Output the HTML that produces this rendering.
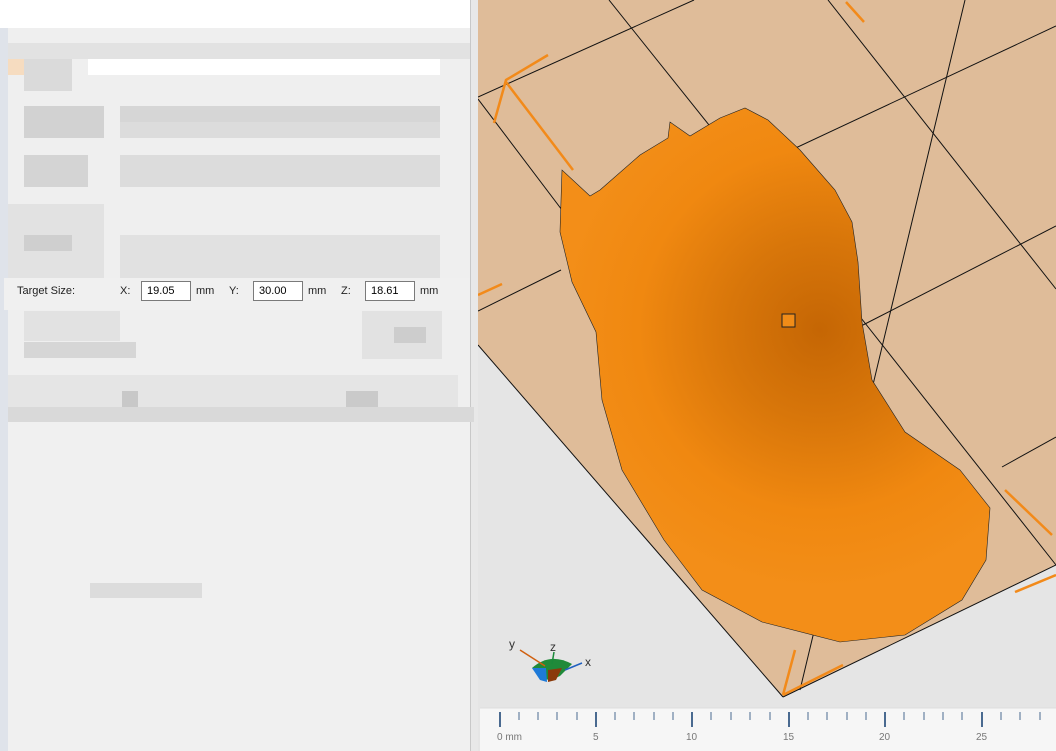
<!DOCTYPE html>
<html><head><style>
body{margin:0;width:1056px;height:751px;overflow:hidden;position:relative;font-family:"Liberation Sans",sans-serif;background:#f0f0f0}
.a{position:absolute}
.t{position:absolute;font-size:11px;color:#222;top:285px}
.in{position:absolute;top:281px;border:1px solid #7a7a7a;background:#fff;font-size:11px;line-height:18px;padding-left:5px;box-sizing:border-box;width:50px;height:20px}
</style></head><body>
<div class="a" style="left:0;top:0;width:472px;height:28px;background:#fff"></div>
<div class="a" style="left:0;top:28px;width:8px;height:723px;background:#dfe3ea"></div>
<div class="a" style="left:8px;top:28px;width:464px;height:394px;background:#efefef"></div>
<div class="a" style="left:8px;top:43px;width:464px;height:16px;background:#e2e2e2"></div>
<div class="a" style="left:8px;top:59px;width:16px;height:16px;background:#f6dcc0"></div>
<div class="a" style="left:24px;top:59px;width:48px;height:32px;background:#dadada"></div>
<div class="a" style="left:88px;top:59px;width:352px;height:16px;background:#fff"></div>
<div class="a" style="left:24px;top:106px;width:80px;height:32px;background:#d2d2d2"></div>
<div class="a" style="left:120px;top:106px;width:320px;height:32px;background:#d6d6d6"></div>
<div class="a" style="left:120px;top:122px;width:320px;height:16px;background:#dcdcdc"></div>
<div class="a" style="left:24px;top:155px;width:64px;height:32px;background:#d4d4d4"></div>
<div class="a" style="left:120px;top:155px;width:320px;height:32px;background:#dcdcdc"></div>
<div class="a" style="left:8px;top:204px;width:96px;height:74px;background:#e2e2e2"></div>
<div class="a" style="left:24px;top:235px;width:48px;height:16px;background:#cfcfcf"></div>
<div class="a" style="left:120px;top:235px;width:320px;height:43px;background:#e1e1e1"></div>
<div class="a" style="left:470px;top:0;width:8px;height:751px;background:#e8e8e8;border-left:1px solid #c8c8c8"></div>
<div class="a" style="left:4px;top:278px;width:466px;height:32px;background:#f0f0f0"></div>
<span class="t" style="left:17px">Target Size:</span>
<span class="t" style="left:120px">X:</span><div class="in" style="left:141px">19.05</div><span class="t" style="left:196px">mm</span>
<span class="t" style="left:229px">Y:</span><div class="in" style="left:253px">30.00</div><span class="t" style="left:308px">mm</span>
<span class="t" style="left:341px">Z:</span><div class="in" style="left:365px">18.61</div><span class="t" style="left:420px">mm</span>
<div class="a" style="left:24px;top:311px;width:96px;height:30px;background:#e2e2e2"></div>
<div class="a" style="left:24px;top:342px;width:112px;height:16px;background:#d6d6d6"></div>
<div class="a" style="left:362px;top:311px;width:80px;height:48px;background:#e2e2e2"></div>
<div class="a" style="left:394px;top:327px;width:32px;height:16px;background:#cdcdcd"></div>
<div class="a" style="left:8px;top:375px;width:450px;height:32px;background:#e5e5e5"></div>
<div class="a" style="left:122px;top:391px;width:16px;height:16px;background:#c8c8c8"></div>
<div class="a" style="left:346px;top:391px;width:32px;height:16px;background:#cacaca"></div>
<div class="a" style="left:8px;top:407px;width:466px;height:15px;background:#d9d9d9"></div>
<div class="a" style="left:90px;top:583px;width:112px;height:15px;background:#dcdcdc"></div>

<svg class="a" style="left:478px;top:0" width="578" height="751" viewBox="478 0 578 751">
<defs>
<radialGradient id="g" cx="820" cy="330" r="260" gradientUnits="userSpaceOnUse">
<stop offset="0" stop-color="#c56604"/><stop offset="0.35" stop-color="#d8760a"/><stop offset="0.7" stop-color="#f08810"/><stop offset="1" stop-color="#f38e18"/>
</radialGradient>
</defs>
<rect x="478" y="0" width="578" height="751" fill="#e5e5e5"/>
<polygon points="478,0 1056,0 1056,565 783,697 478,345" fill="#dfbc99"/>
<g stroke="#111" stroke-width="1" fill="none">
<line x1="478" y1="97" x2="694" y2="0"/>
<line x1="609" y1="0" x2="713" y2="130"/>
<line x1="478" y1="99" x2="565" y2="214"/>
<line x1="770" y1="160" x2="1056" y2="26"/>
<line x1="828" y1="0" x2="1056" y2="289"/>
<line x1="965" y1="0" x2="800" y2="690"/>
<line x1="478" y1="311" x2="561" y2="270"/>
<line x1="861" y1="326" x2="1056" y2="226"/>
<line x1="861" y1="318" x2="1056" y2="565"/>
<line x1="1002" y1="467" x2="1056" y2="437"/>
<line x1="478" y1="345" x2="783" y2="697"/>
<line x1="783" y1="697" x2="1056" y2="565"/>
</g>
<g stroke="#f28a1a" stroke-width="2.5" fill="none">
<polyline points="548,55 506,80 494,123"/><line x1="506" y1="82" x2="573" y2="170"/>
<line x1="846" y1="2" x2="864" y2="22"/>
<line x1="478" y1="295" x2="502" y2="284"/>
<line x1="795" y1="650" x2="783" y2="695"/><line x1="783" y1="695" x2="843" y2="665"/>
<line x1="1005" y1="490" x2="1052" y2="535"/><line x1="1015" y1="592" x2="1056" y2="575"/>
</g>
<path d="M600,190 L640,155 L668,138 L670,122 L690,136 L720,118 L745,108 L768,120 L800,150 L835,190 L852,222 L858,262 L862,322 L872,380 L905,432 L960,470 L990,508 L986,560 L962,600 L905,635 L840,642 L762,622 L702,590 L664,540 L622,470 L602,400 L596,332 L572,282 L560,232 L562,170 L590,196 Z" fill="url(#g)" stroke="#222" stroke-width="0.6"/>
<rect x="782" y="314" width="13" height="13" fill="#f08c18" stroke="#222"/>
<rect x="480" y="708" width="576" height="43" fill="#f6f6f6"/>
<line x1="480" y1="708" x2="1056" y2="708" stroke="#ddd"/>
<g stroke="#4a6a90" stroke-width="1">
<line x1="500" y1="712" x2="500" y2="727" stroke-width="2"/><line x1="596" y1="712" x2="596" y2="727" stroke-width="2"/><line x1="692" y1="712" x2="692" y2="727" stroke-width="2"/><line x1="789" y1="712" x2="789" y2="727" stroke-width="2"/><line x1="885" y1="712" x2="885" y2="727" stroke-width="2"/><line x1="982" y1="712" x2="982" y2="727" stroke-width="2"/>
<path d="M519,712v8M538,712v8M557,712v8M577,712v8M615,712v8M634,712v8M654,712v8M673,712v8M711,712v8M731,712v8M750,712v8M770,712v8M808,712v8M827,712v8M847,712v8M866,712v8M904,712v8M924,712v8M943,712v8M962,712v8M1001,712v8M1020,712v8M1040,712v8"/>
</g>
<g font-size="10" fill="#777" font-family="Liberation Sans,sans-serif">
<text x="497" y="740">0 mm</text><text x="593" y="740">5</text><text x="686" y="740">10</text><text x="783" y="740">15</text><text x="879" y="740">20</text><text x="976" y="740">25</text>
</g>
<path d="M532,668 Q550,652 572,664 L560,676 Q548,682 540,678 Z" fill="#1f8a3a"/>
<path d="M532,668 L546,668 L547,682 L540,680 Z" fill="#1e7ad8"/>
<path d="M548,670 L562,668 L556,680 L548,682 Z" fill="#8a3a0a"/>
<line x1="545" y1="666" x2="520" y2="650" stroke="#d06010" stroke-width="1.5"/>
<line x1="552" y1="664" x2="554" y2="652" stroke="#1a8a3a" stroke-width="1.5"/>
<line x1="565" y1="670" x2="582" y2="663" stroke="#2060c0" stroke-width="1.5"/>
<g font-size="12" fill="#333" font-family="Liberation Sans,sans-serif"><text x="509" y="648">y</text><text x="550" y="651">z</text><text x="585" y="666">x</text></g>
</svg>
</body></html>
